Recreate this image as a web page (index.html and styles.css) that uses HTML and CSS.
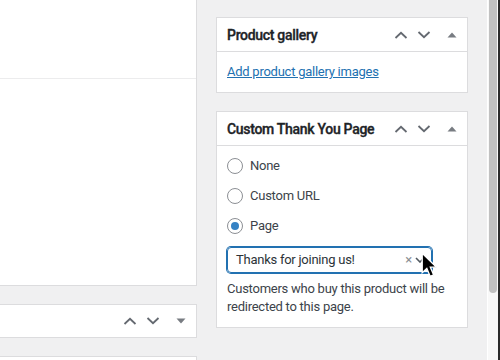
FILE: index.html
```html
<!DOCTYPE html>
<html lang="en">
  <head>
    <meta charset="UTF-8" />
    <meta name="viewport" content="width=device-width, initial-scale=1" />
    <title>Edit product</title>
    <link rel="stylesheet" href="styles.css">
  </head>
  <body>
    <div class="screen">
      <div class="main-col">
        <div class="editor-panel">
          <div class="editor-top"></div>
        </div>

        <div class="postbox">
          <div class="postbox-header">
            <h2></h2>
            <div class="handle-actions">
              <button class="handle-order">
                <svg viewBox="0 0 14 8" width="14" height="8"><polyline points="1.5,7 7,1.8 12.5,7" /></svg>
              </button>
              <button class="handle-order">
                <svg viewBox="0 0 14 8" width="14" height="8"><polyline points="1.5,1 7,6.2 12.5,1" /></svg>
              </button>
              <button class="handle-toggle">
                <svg viewBox="0 0 10 6" width="10" height="6"><polygon points="0.5,0.5 9.5,0.5 5,5.5" /></svg>
              </button>
            </div>
          </div>
        </div>

        <div class="postbox">
          <div class="postbox-header"><h2></h2></div>
        </div>
      </div>

      <div class="side-col">
        <div class="postbox">
          <div class="postbox-header">
            <h2>Product gallery</h2>
            <div class="handle-actions">
              <button class="handle-order">
                <svg viewBox="0 0 14 8" width="14" height="8"><polyline points="1.5,7 7,1.8 12.5,7" /></svg>
              </button>
              <button class="handle-order">
                <svg viewBox="0 0 14 8" width="14" height="8"><polyline points="1.5,1 7,6.2 12.5,1" /></svg>
              </button>
              <button class="handle-toggle">
                <svg viewBox="0 0 10 6" width="10" height="6"><polygon points="0.5,5.5 9.5,5.5 5,0.5" /></svg>
              </button>
            </div>
          </div>
          <div class="inside">
            <a href="#" class="gallery-link">Add product gallery images</a>
          </div>
        </div>

        <div class="postbox">
          <div class="postbox-header">
            <h2>Custom Thank You Page</h2>
            <div class="handle-actions">
              <button class="handle-order">
                <svg viewBox="0 0 14 8" width="14" height="8"><polyline points="1.5,7 7,1.8 12.5,7" /></svg>
              </button>
              <button class="handle-order">
                <svg viewBox="0 0 14 8" width="14" height="8"><polyline points="1.5,1 7,6.2 12.5,1" /></svg>
              </button>
              <button class="handle-toggle">
                <svg viewBox="0 0 10 6" width="10" height="6"><polygon points="0.5,5.5 9.5,5.5 5,0.5" /></svg>
              </button>
            </div>
          </div>
          <div class="inside thankyou">
            <label class="radio-row"><span class="radio"></span>None</label>
            <label class="radio-row"><span class="radio"></span>Custom URL</label>
            <label class="radio-row"><span class="radio checked"></span>Page</label>

            <div class="page-select">
              <span class="page-select-value">Thanks for joining us!</span>
              <span class="page-select-clear">×</span>
              <svg class="page-select-arrow" viewBox="0 0 10 6" width="10" height="6"><polyline points="1,1 5,5 9,1" /></svg>
              <svg class="cursor" viewBox="0 0 14 22" width="17" height="27">
                <path d="M1 1 L1 17 L4.8 13.4 L7.6 20 L10.4 18.8 L7.7 12.4 L12.8 12.4 Z" />
              </svg>
            </div>

            <p class="description">Customers who buy this product will be redirected to this page.</p>
          </div>
        </div>
      </div>

      <div class="scrollbar">
        <div class="scroll-track">
          <div class="scroll-thumb"></div>
        </div>
        <div class="window-edge"></div>
      </div>
    </div>
  </body>
</html>
```

FILE: styles.css
```css
body {
  margin: 0;
  padding: 0;
  background: #f0f0f1;
  color: #1d2327;
  font-family: Roboto, "Liberation Sans", Arial, sans-serif;
  font-size: 13px;
  line-height: 18px;
  letter-spacing: -0.25px;
  overflow: hidden;
}

.screen {
  display: flex;
  height: 360px;
  overflow: hidden;
}

.main-col {
  width: 197px;
  flex-shrink: 0;
}

.editor-panel {
  height: 285px;
  background: #fff;
  border-right: 1px solid #dcdcde;
  border-bottom: 1px solid #dcdcde;
}

.editor-top {
  height: 78px;
  border-bottom: 1px solid #ececed;
}

.side-col {
  width: 252px;
  flex-shrink: 0;
  margin-left: 19px;
  padding-top: 17px;
}

.postbox {
  background: #fff;
  border: 1px solid #dcdcde;
  margin-bottom: 18px;
}

.main-col .postbox {
  border-left: none;
}

.main-col .editor-panel + .postbox {
  margin-top: 18px;
}

.postbox-header {
  display: flex;
  align-items: center;
  height: 33px;
  border-bottom: 1px solid #dcdcde;
}

.main-col .postbox-header {
  height: 32px;
  border-bottom: none;
}

.postbox-header h2 {
  flex: 1;
  margin: 0;
  padding-left: 10px;
  font-size: 14px;
  font-weight: 500;
  letter-spacing: -0.3px;
  color: #1d2327;
  white-space: nowrap;
  -webkit-text-stroke: 0.35px #1d2327;
}

.handle-actions {
  display: flex;
  align-items: center;
  height: 100%;
}

.handle-actions button {
  background: none;
  border: none;
  padding: 0;
  height: 100%;
  display: flex;
  align-items: center;
  justify-content: center;
  cursor: pointer;
}

.handle-order {
  width: 23px;
}

.handle-order:nth-child(2) {
  margin-right: 2px;
}

.handle-order svg {
  fill: none;
  stroke: #646970;
  stroke-width: 1.8;
}

.handle-toggle {
  width: 30px;
}

.handle-toggle svg {
  fill: #787c82;
}

.inside {
  padding: 11px 10px;
}

.gallery-link {
  color: #2271b1;
  text-decoration: underline;
}

.thankyou {
  padding-top: 11px;
}

.radio-row {
  display: flex;
  align-items: center;
  gap: 7px;
  height: 18px;
  margin-bottom: 12px;
  color: #3c434a;
}

.radio {
  width: 14px;
  height: 14px;
  border: 1px solid #8c8f94;
  border-radius: 50%;
  display: flex;
  align-items: center;
  justify-content: center;
}

.radio.checked::before {
  content: "";
  width: 8px;
  height: 8px;
  border-radius: 50%;
  background: #3582c4;
}

.page-select {
  position: relative;
  width: 205px;
  height: 26px;
  margin-top: 11px;
  box-sizing: border-box;
  border: 1px solid #2271b1;
  border-radius: 4px;
  box-shadow: 0 0 0 1px #2271b1;
  display: flex;
  align-items: center;
  padding: 0 6px 0 8px;
  color: #2c3338;
}

.page-select-value {
  flex: 1;
}

.page-select-clear {
  color: #8c8f94;
  font-size: 13px;
  margin-right: 3px;
}

.page-select-arrow {
  fill: none;
  stroke: #50575e;
  stroke-width: 1.6;
}

.cursor {
  position: absolute;
  left: 193px;
  top: 4px;
  fill: #000;
  stroke: #fff;
  stroke-width: 1.1;
}

.description {
  margin: 7px 0 0;
  color: #3c434a;
}

.scrollbar {
  margin-left: 19px;
  display: flex;
  flex: 1;
  border-left: 1px solid #fff;
}

.scroll-track {
  width: 10px;
  background: #f8f8f8;
  padding: 0 1px;
  box-sizing: border-box;
}

.scroll-thumb {
  height: 293px;
  background: #c1c1c1;
  border-radius: 0 0 4px 4px;
}

.window-edge {
  flex: 1;
  background: #2b2b2b;
}
```
